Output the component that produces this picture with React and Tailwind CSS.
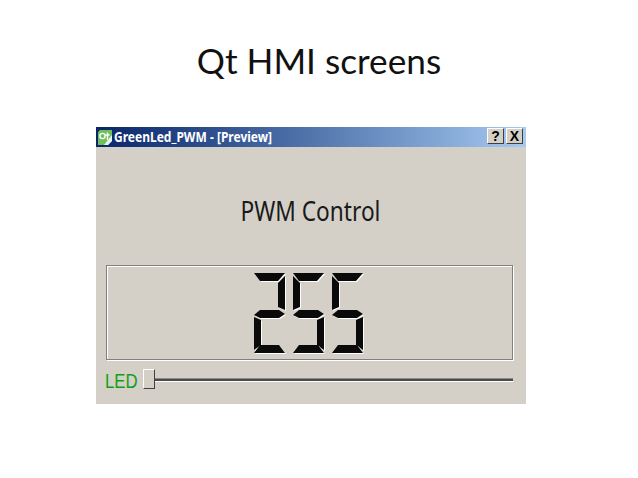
import React from 'react';

// segment shapes in a 32x80 digit box
const SEGMENTS = {
  top: '0,0 31,0 24,8 6,8',
  upperLeft: '0,3 7,10 7,34 0,37',
  upperRight: '31,3 24,10 24,34 31,37',
  middle: '0,42 6,37 25,37 31,41 25,45 6,45',
  lowerLeft: '0,44 7,47 7,72 0,77',
  lowerRight: '31,44 24,47 24,72 31,77',
  bottom: '6,72 25,72 31,80 0,80',
};

const DIGITS = {
  2: ['top', 'upperRight', 'middle', 'lowerLeft', 'bottom'],
  5: ['top', 'upperLeft', 'middle', 'lowerRight', 'bottom'],
};

function LcdDigit({ value }) {
  return (
    <svg width="33" height="82" viewBox="0 0 33 82">
      {DIGITS[value].map((name) => (
        <g key={name}>
          <polygon points={SEGMENTS[name]} fill="#ffffff" transform="translate(1 1)" />
          <polygon points={SEGMENTS[name]} fill="#0a0a0a" />
        </g>
      ))}
    </svg>
  );
}

function QtLogo() {
  return (
    <svg width="16" height="17" viewBox="0 0 16 17">
      <path d="M3 1 H15 V12 L11 16 H1 V3 Z" fill="#6fbf5a" />
      <path d="M15 6 V12 L11 16 H7 Z" fill="#e8f0f8" />
      <circle cx="5.5" cy="7" r="2.6" fill="none" stroke="#ffffff" strokeWidth="1.4" />
      <path d="M10.5 3.5 V11 M8.5 6 H12.5" stroke="#ffffff" strokeWidth="1.4" />
    </svg>
  );
}

function TitleButton({ children }) {
  return (
    <div className="w-[17px] h-[16px] flex items-center justify-center bg-[#d4d0c8] border border-t-white border-l-white border-r-[#404040] border-b-[#404040] text-[14px] font-bold leading-none text-black font-['Liberation_Sans',sans-serif]">
      {children}
    </div>
  );
}

export default function App() {
  return (
    <div className="w-[638px] h-[478px] bg-white flex flex-col overflow-hidden">
      <h1 className="mt-[38px] h-[44px] leading-[44px] text-center text-[35.2px] text-[#111] font-['Lato',sans-serif] whitespace-nowrap">
        Qt HMI screens
      </h1>

      <div className="mt-[45px] ml-[96px] w-[430px] h-[277px] bg-[#d4d0c8] flex flex-col">
        {/* title bar */}
        <div className="h-[20px] flex items-center pl-[1px] pr-[3px] bg-gradient-to-r from-[#0a246a] to-[#a6caf0]">
          <QtLogo />
          <span className="ml-[1px] text-white text-[13.5px] font-bold font-['Noto_Sans',sans-serif] whitespace-nowrap origin-left scale-x-[0.89]">
            GreenLed_PWM - [Preview]
          </span>
          <div className="ml-auto mb-[2px] flex gap-[2px]">
            <TitleButton>?</TitleButton>
            <TitleButton>X</TitleButton>
          </div>
        </div>

        <div className="mt-[31px] h-[64px] pr-[2px] flex justify-center leading-[64px] text-[28px] text-[#1a1a1a] font-['Noto_Sans',sans-serif] whitespace-nowrap">
          <span className="inline-block scale-x-[0.81]">PWM Control</span>
        </div>

        {/* lcd panel */}
        <div
          aria-label="255"
          className="ml-[10px] mr-[13px] mt-[23px] h-[95px] border border-[#808080] shadow-[1px_1px_0_#ffffff,inset_1px_1px_0_#ffffff] flex items-center justify-center gap-[6px] pt-[2px]"
        >
          <LcdDigit value={2} />
          <LcdDigit value={5} />
          <LcdDigit value={5} />
        </div>

        {/* slider row */}
        <div className="mt-[9px] ml-[9px] mr-[13px] h-[20px] flex items-center">
          <span className="w-[38px] mt-[5px] text-[19.5px] leading-none text-[#12a012] font-['Liberation_Sans',sans-serif] origin-left scale-x-[0.86]">
            LED
          </span>
          <div className="relative flex-1 h-[3px] border-t border-[#8a8a8a] bg-[#4a4a4a] shadow-[0_1px_0_#ffffff]">
            <div className="absolute left-0 top-[-10px] w-[12px] h-[20px] bg-[#d4d0c8] border border-t-white border-l-white border-r-[#404040] border-b-[#404040]" />
          </div>
        </div>
      </div>
    </div>
  );
}
